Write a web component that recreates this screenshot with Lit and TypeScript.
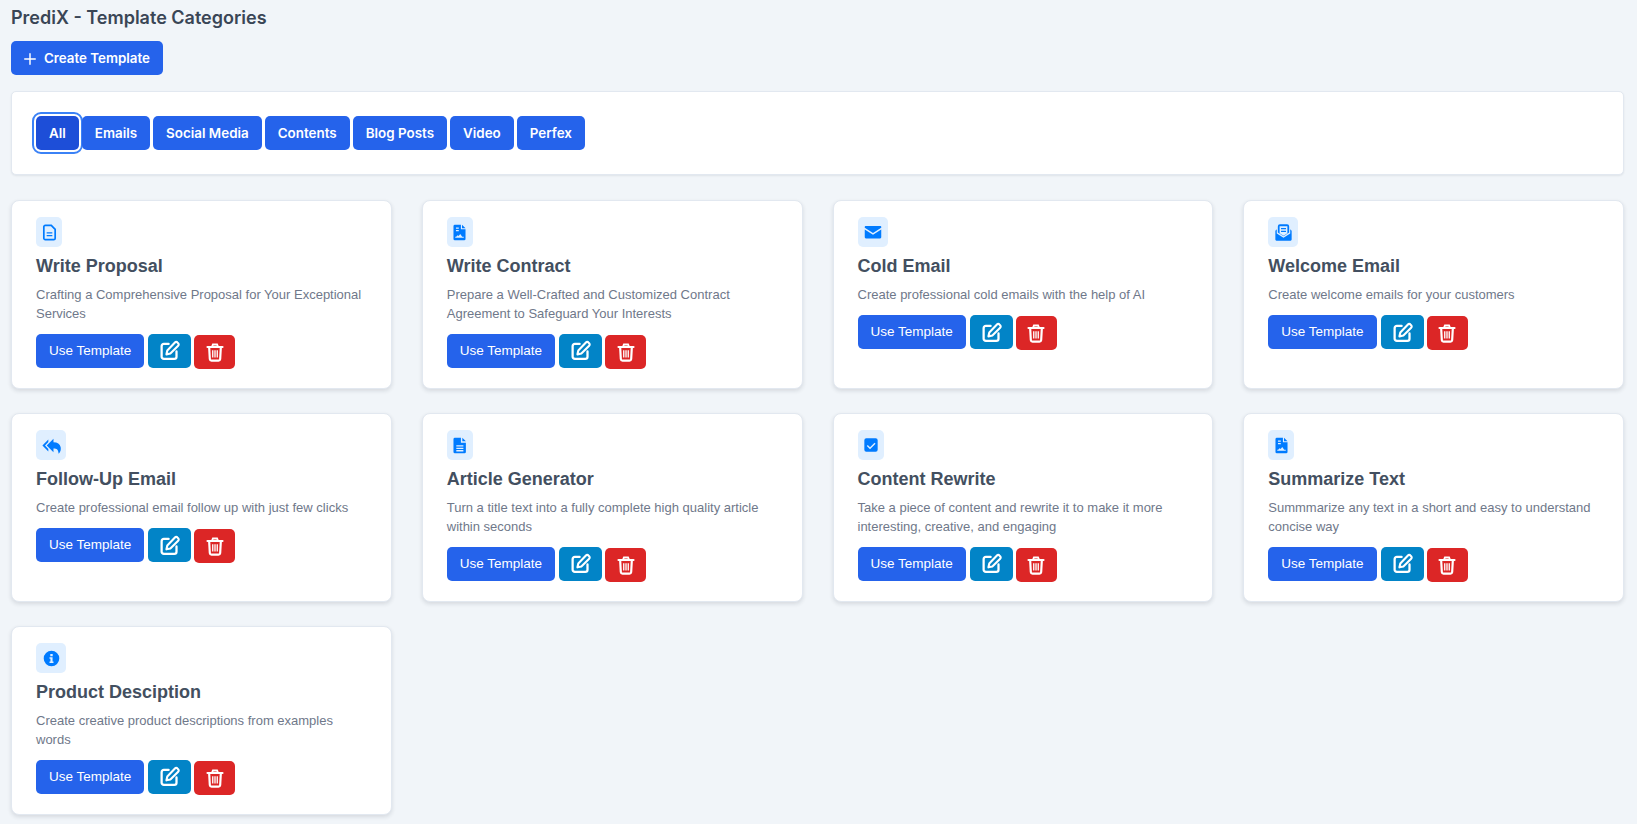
import { LitElement, html, css, svg } from "lit";
import { customElement } from "lit/decorators.js";

const icons: Record<string, unknown> = {
  fileOutline: svg`<path d="M6 2h8.500L20 7.500V20a2 2 0 0 1-2 2H6a2 2 0 0 1-2-2V4a2 2 0 0 1 2-2z" fill="none" stroke="currentColor" stroke-width="2.400"/><path d="M8 12.500h8M8 16.500h8" stroke="currentColor" stroke-width="1.600"/>`,
  fileImage: svg`<path fill-rule="evenodd" d="M5.500 1h8.500v6.500h6.500V21a2 2 0 0 1-2 2h-13a2 2 0 0 1-2-2V3a2 2 0 0 1 2-2zM7 5v1.600h4V5zM7 8.500v1.600h4V8.500zM6 19.500h12v-1.400h-2.200l-2.800-4-2.200 3-1.500-1.300-2 2.300H6z" fill="currentColor"/><path d="M15.500 1l5 5h-5z" fill="currentColor"/>`,
  envelope: svg`<path d="M2 4h20a1.500 1.500 0 0 1 1 1v1.200l-11 7.200L1 6.200V5a1.500 1.500 0 0 1 1-1zM1 8.600l11 7.200 11-7.200V19a1.500 1.500 0 0 1-1.500 1.500h-19A1.500 1.500 0 0 1 1 19z" fill="currentColor"/>`,
  envelopeOpen: svg`<path fill-rule="evenodd" d="M7 .500h10a3 3 0 0 1 3 3V12l-8 5.200L4 12V3.500a3 3 0 0 1 3-3zM6.500 3v10l5.500 3.500 5.500-3.500V3zM8.500 5.500v1.800h7V5.500zM8.500 9.500v1.800h7V9.500z" fill="currentColor"/><path d="M2.500 7.500v5.800L12 19.500l9.500-6.200V7.500L23.500 9.500V22a1.500 1.500 0 0 1-1.500 1.500H2A1.500 1.500 0 0 1 .5 22V9.500z" fill="currentColor"/>`,
  replyAll: svg`<path d="M8 4.500.5 12 8 19.500v-3L3.800 12 8 7.500z" fill="currentColor"/><path d="M14.500 3.500 6 12l8.500 8.500v-4.800c4.200 0 6.200 1.500 6.500 6.800 2.300-2.400 3.200-5.500 2.500-8.600-.8-4-4-6-9-6.100z" fill="currentColor"/>`,
  fileLines: svg`<path fill-rule="evenodd" d="M5.500 1H14v7h7v13a2 2 0 0 1-2 2H5.500a2 2 0 0 1-2-2V3a2 2 0 0 1 2-2zM7.500 11.500v1.800h10v-1.800zM7.500 15v1.800h10V15zM7.500 18.500v1.800h10v-1.800z" fill="currentColor"/><path d="M16 1l5 5h-5z" fill="currentColor"/>`,
  squareCheck: svg`<path fill-rule="evenodd" d="M5 2h14a3 3 0 0 1 3 3v14a3 3 0 0 1-3 3H5a3 3 0 0 1-3-3V5a3 3 0 0 1 3-3zm12.300 6.500-6.800 6.700-3.300-3.200-1.500 1.500 4.800 4.700 8.300-8.200z" fill="currentColor"/>`,
  circleInfo: svg`<path fill-rule="evenodd" d="M12 1a11 11 0 1 1 0 22 11 11 0 0 1 0-22zm-1.700 4.500v3.200h3.400V5.500zM9.200 10.400v2h1.300v4H9.200v2.100h5.600v-2.100h-1.300v-6z" fill="currentColor"/>`,
  pen: svg`<path d="M11 4.500H5.500A2.500 2.500 0 0 0 3 7v12a2.500 2.500 0 0 0 2.500 2.500h12A2.500 2.500 0 0 0 20 19v-6" fill="none" stroke="currentColor" stroke-width="2.600" stroke-linecap="round"/><path d="M18.200 2.800a2 2 0 0 1 2.900 0l.8.8a2 2 0 0 1 0 2.900L13 15.400l-4.500 1 1-4.500z" fill="none" stroke="currentColor" stroke-width="2.400" stroke-linejoin="round"/>`,
  trash: svg`<path d="M3 6h18" stroke="currentColor" stroke-width="2.600" stroke-linecap="round"/><path d="M8.500 5.500 9.500 3h5l1 2.500" fill="none" stroke="currentColor" stroke-width="2.200"/><path d="M5 6.500l.8 14a2 2 0 0 0 2 1.800h8.400a2 2 0 0 0 2-1.800l.8-14" fill="none" stroke="currentColor" stroke-width="2.600"/><path d="M9.300 10v8.500M12 10v8.500M14.700 10v8.500" stroke="currentColor" stroke-width="1.600"/>`,
  plus: svg`<path d="M12 3v18M3 12h18" stroke="currentColor" stroke-width="2.500" stroke-linecap="round"/>`,
};

const filters = ["All", "Emails", "Social Media", "Contents", "Blog Posts", "Video", "Perfex"];

const templates = [
  { icon: "fileOutline", size: 17, title: "Write Proposal", desc: "Crafting a Comprehensive Proposal for Your Exceptional Services" },
  { icon: "fileImage", size: 17, title: "Write Contract", desc: "Prepare a Well-Crafted and Customized Contract Agreement to Safeguard Your Interests" },
  { icon: "envelope", size: 18, title: "Cold Email", desc: "Create professional cold emails with the help of AI" },
  { icon: "envelopeOpen", size: 17, title: "Welcome Email", desc: "Create welcome emails for your customers" },
  { icon: "replyAll", size: 19, title: "Follow-Up Email", desc: "Create professional email follow up with just few clicks" },
  { icon: "fileLines", size: 17, title: "Article Generator", desc: "Turn a title text into a fully complete high quality article within seconds" },
  { icon: "squareCheck", size: 16, title: "Content Rewrite", desc: "Take a piece of content and rewrite it to make it more interesting, creative, and engaging" },
  { icon: "fileImage", size: 17, title: "Summarize Text", desc: "Summmarize any text in a short and easy to understand concise way" },
  { icon: "circleInfo", size: 17, title: "Product Desciption", desc: "Create creative product descriptions from examples words" },
];

const icon = (name: string, size: number) =>
  html`<svg width=${size} height=${size} viewBox="0 0 24 24" aria-hidden="true">${icons[name]}</svg>`;

@customElement("app-root")
export class AppRoot extends LitElement {
  static styles = css`
    :host {
      display: block;
      min-height: 824px;
      box-sizing: border-box;
      background: #f1f5f9;
      padding: 7px 13px 0 11px;
      font-family: "Liberation Sans", Arial, sans-serif;
    }
    h1 {
      margin: 0;
      font: 600 18px/22px Inter, sans-serif;
      color: #3a4656;
    }
    .btn {
      display: inline-flex;
      align-items: center;
      justify-content: center;
      box-sizing: border-box;
      height: 34px;
      border: 0;
      border-radius: 5px;
      color: #fff;
      background: #2563eb;
      padding: 0 13px;
      flex: none;
    }
    .create {
      margin-top: 12px;
      gap: 7px;
      font: 600 13.333px/1 Inter, sans-serif;
      padding: 1px 13px 0 12px;
    }
    .filters {
      margin-top: 16px;
      height: 84px;
      box-sizing: border-box;
      background: #fff;
      border: 1px solid #e2e8f0;
      border-radius: 5px;
      box-shadow: 0 1px 2px rgba(15, 23, 42, 0.08);
      display: flex;
      align-items: center;
      gap: 3px;
      padding: 0 25px;
    }
    .filters .btn {
      font: 600 13.420px/1 Inter, sans-serif;
      padding-top: 2px;
    }
    .filters .btn.active {
      background: #1d4ed8;
      margin-left: -1px;
      outline: 2px solid #3b82f6;
      outline-offset: 2px;
    }
    .grid {
      margin-top: 25px;
      display: grid;
      grid-template-columns: repeat(4, 1fr);
      gap: 24.500px 30px;
    }
    .card {
      box-sizing: border-box;
      background: #fff;
      border: 1px solid #e2e8f0;
      border-radius: 8px;
      box-shadow: 0 2px 4px rgba(15, 23, 42, 0.12);
      padding: 16px 24px 17px;
      min-height: 188.500px;
    }
    .badge {
      width: 26px;
      height: 30px;
      border-radius: 5px;
      background: #e0efff;
      color: #007bff;
      display: flex;
      align-items: center;
      justify-content: center;
    }
    .card.wide .badge {
      width: 30px;
    }
    h2 {
      margin: 8px 0 0;
      font: 700 18px/22px "Liberation Sans", Arial, sans-serif;
      color: #434f60;
    }
    p {
      margin: 9px 0 0;
      font: 400 13px/18.500px "Liberation Sans", Arial, sans-serif;
      color: #6f788a;
    }
    .actions {
      display: flex;
      align-items: flex-start;
      gap: 4px;
      margin-top: 10.500px;
    }
    .use {
      font: 400 13.500px/1 "Liberation Sans", Arial, sans-serif;
    }
    .edit {
      background: #0284c7;
      width: 43px;
      padding: 0;
    }
    .del {
      background: #dc2626;
      width: 41px;
      padding: 0;
      margin-left: -1px;
      margin-top: 1px;
    }
  `;

  render() {
    return html`
      <h1>PrediX - Template Categories</h1>
      <button class="btn create">${icon("plus", 14)}Create Template</button>
      <section class="filters">
        ${filters.map((f, i) => html`<button class="btn ${i === 0 ? "active" : ""}">${f}</button>`)}
      </section>
      <section class="grid">
        ${templates.map(
          (t, i) => html`
            <article class="card ${[2, 3, 4, 8].includes(i) ? "wide" : ""}">
              <div class="badge">${icon(t.icon, t.size)}</div>
              <h2>${t.title}</h2>
              <p>${t.desc}</p>
              <div class="actions">
                <button class="btn use">Use Template</button>
                <button class="btn edit">${icon("pen", 21)}</button>
                <button class="btn del">${icon("trash", 20)}</button>
              </div>
            </article>
          `,
        )}
      </section>
    `;
  }
}
